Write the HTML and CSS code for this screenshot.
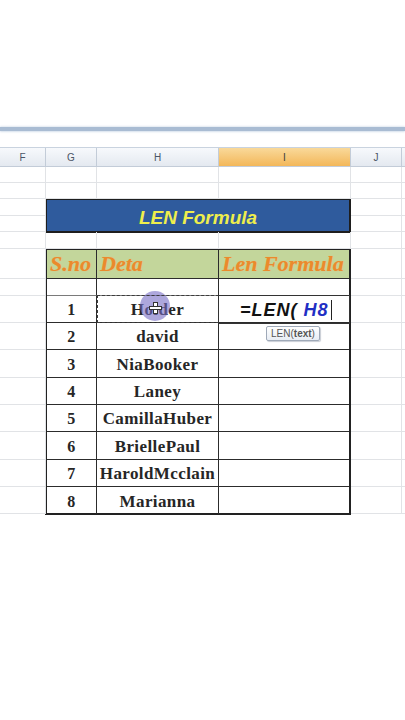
FILE: index.html
```html
<!DOCTYPE html>
<html>
<head>
<meta charset="utf-8">
<link rel="stylesheet" href="styles.css">
</head>
<body>
<div class="page">
  <div class="topgap"></div>
  <div class="bar"></div>
  <div class="gap2"></div>
  <div class="sheet">
    <div class="title">LEN Formula</div>
    <div class="tbl">
      <div class="hd c1">S.no</div>
      <div class="hd c2">Deta</div>
      <div class="hd c3">Len Formula</div>
      <div class="td c1 blank"></div><div class="td c2 blank"></div><div class="td c3 blank"></div>
      <div class="td c1 num">1</div>
      <div class="td c2 copy">Holder<span class="click"><span class="cross"></span></span></div>
      <div class="td c3 edit"><span class="fx">=LEN(&nbsp;<span class="ref">H8</span></span><span class="caret"></span><span class="tip">LEN(<b>text</b>)</span></div>
      <div class="td c1 num">2</div><div class="td c2">david</div><div class="td c3"></div>
      <div class="td c1 num">3</div><div class="td c2">NiaBooker</div><div class="td c3"></div>
      <div class="td c1 num">4</div><div class="td c2">Laney</div><div class="td c3"></div>
      <div class="td c1 num">5</div><div class="td c2">CamillaHuber</div><div class="td c3"></div>
      <div class="td c1 num">6</div><div class="td c2">BriellePaul</div><div class="td c3"></div>
      <div class="td c1 num">7</div><div class="td c2">HaroldMcclain</div><div class="td c3"></div>
      <div class="td c1 num last">8</div><div class="td c2 last">Marianna</div><div class="td c3 last"></div>
    </div>

    <div class="ch">F</div><div class="ch">G</div><div class="ch">H</div><div class="ch sel">I</div><div class="ch">J</div><div class="ch end"></div>

    <div class="cell"></div><div class="cell"></div><div class="cell"></div><div class="cell"></div><div class="cell"></div><div class="cell end"></div>
    <div class="cell"></div><div class="cell"></div><div class="cell"></div><div class="cell"></div><div class="cell"></div><div class="cell end"></div>
    <div class="cell"></div><div class="cell"></div><div class="cell end"></div>
    <div class="cell"></div><div class="cell"></div><div class="cell end"></div>
    <div class="cell"></div><div class="cell"></div><div class="cell"></div><div class="cell"></div><div class="cell"></div><div class="cell end"></div>
    <div class="cell"></div><div class="cell"></div><div class="cell end"></div>
    <div class="cell"></div><div class="cell"></div><div class="cell end"></div>
    <div class="cell"></div><div class="cell"></div><div class="cell end"></div>
    <div class="cell"></div><div class="cell"></div><div class="cell end"></div>
    <div class="cell"></div><div class="cell"></div><div class="cell end"></div>
    <div class="cell"></div><div class="cell"></div><div class="cell end"></div>
    <div class="cell"></div><div class="cell"></div><div class="cell end"></div>
    <div class="cell"></div><div class="cell"></div><div class="cell end"></div>
    <div class="cell"></div><div class="cell"></div><div class="cell end"></div>
    <div class="cell"></div><div class="cell"></div><div class="cell end"></div>
  </div>
</div>
</body>
</html>
```
FILE: styles.css
```css
html, body {
  margin: 0;
  padding: 0;
  background: #ffffff;
}
.page {
  width: 405px;
  height: 720px;
  overflow: hidden;
  background: #ffffff;
  font-family: "Liberation Sans", Arial, sans-serif;
}
.topgap { height: 127px; }
.bar {
  height: 4px;
  background: #a9bcd3;
  box-shadow: 0 1px 2px #d6e0ec, 0 -1px 2px #e2e9f2;
}
.gap2 {
  height: 16px;
  border-bottom: 1px solid #c9d3df;
}
.sheet {
  display: grid;
  grid-template-columns: 46px 51px 122px 132px 51px 1fr;
  grid-template-rows: 19px 16px 16px 17px 16px 17px 30px 17px 27px 27px 28px 27px 27px 28px 27px 27px;
}
.ch {
  box-sizing: border-box;
  border-right: 1px solid #c3ccd8;
  border-bottom: 1px solid #c3ccd8;
  background: linear-gradient(#f7f9fc, #e4e9f0);
  color: #4a5566;
  font-size: 10px;
  display: flex;
  align-items: center;
  justify-content: center;
}
.ch.sel {
  background: linear-gradient(#f9d99a, #f3b759);
  color: #3a3a3a;
}
.ch.end { border-right: none; }
.cell {
  box-sizing: border-box;
  border-right: 1px solid #e1e3e6;
  border-bottom: 1px solid #e1e3e6;
}
.cell.end { border-right: none; }

.title {
  grid-column: 2 / 5;
  grid-row: 4 / 6;
  margin: -1px 0 -1px -1px;
  border: 2px solid #1e1e1e;
  background: #2f5b9d;
  color: #eeee4c;
  font-family: "Liberation Sans", Arial, sans-serif;
  font-weight: bold;
  font-style: italic;
  font-size: 19px;
  display: flex;
  align-items: center;
  justify-content: center;
  padding-top: 4px;
}

.tbl {
  grid-column: 2 / 5;
  grid-row: 7 / 17;
  margin: -1px 0 -1px -1px;
  border: 2px solid #222;
  display: grid;
  grid-template-columns: 50px 122px 1fr;
  grid-template-rows: 29px 17px 27px 27px 28px 27px 27px 28px 27px 27px;
  background: #fff;
}
.hd, .td {
  box-sizing: border-box;
  border-right: 1px solid #2c2c2c;
  border-bottom: 1px solid #2c2c2c;
}
.c3 { border-right: none; }
.last { border-bottom: none; }
.hd {
  background: #c3d69b;
  color: #ea8a2c;
  font-family: "Liberation Serif", "Times New Roman", serif;
  font-style: italic;
  font-weight: bold;
  font-size: 22px;
  display: flex;
  align-items: center;
  padding-left: 3px;
  text-shadow: 0 0 1px #f3b26a;
}
.blank { border-bottom-color: #7a7a7a; }
.td {
  position: relative;
  display: flex;
  align-items: center;
  justify-content: center;
  font-family: "Liberation Serif", "Times New Roman", serif;
  font-weight: bold;
  font-size: 17px;
  letter-spacing: 0.4px;
  color: #262626;
  padding-top: 2px;
}
.num { font-size: 16px; }

.copy::after {
  content: "";
  position: absolute;
  left: 0;
  top: -1px;
  right: -1px;
  bottom: -1px;
  border: 1px dashed #3c3c3c;
}
.click {
  position: absolute;
  left: 43px;
  top: -5px;
  width: 30px;
  height: 30px;
  border-radius: 50%;
  background: rgba(118, 108, 196, 0.6);
}
.cross {
  position: absolute;
  left: 10px;
  top: 11px;
  width: 12px;
  height: 12px;
}
.cross::before, .cross::after {
  content: "";
  position: absolute;
  background: #fff;
  border: 1px solid #333;
}
.cross::before { left: 3px; top: 0; width: 3px; height: 10px; }
.cross::after { left: -1px; top: 4px; width: 11px; height: 2px; }

.edit {
  outline: 1px solid #333;
  outline-offset: 0;
  justify-content: flex-start;
  padding-left: 21px;
  overflow: visible;
}
.fx {
  font-family: "Liberation Sans", Arial, sans-serif;
  font-style: italic;
  font-weight: bold;
  font-size: 18px;
  letter-spacing: 1px;
  color: #111;
}
.ref { color: #1f2fc4; }
.caret {
  display: inline-block;
  width: 1px;
  height: 20px;
  background: #222;
  margin-left: 2px;
}
.tip {
  position: absolute;
  left: 47px;
  top: 30px;
  padding: 1px 4px;
  font-family: "Liberation Sans", Arial, sans-serif;
  font-weight: normal;
  font-size: 10px;
  letter-spacing: 0;
  color: #555;
  background: linear-gradient(#ffffff, #e8edf4);
  border: 1px solid #9fa9b8;
  border-radius: 2px;
  box-shadow: 1px 1px 1px #c8cdd4;
  z-index: 2;
}
.tip b { font-weight: bold; }
```
